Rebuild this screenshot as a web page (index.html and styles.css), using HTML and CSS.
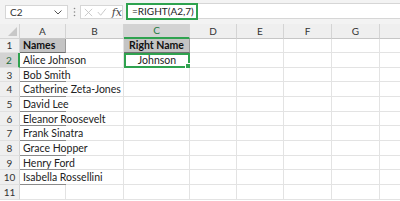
FILE: index.html
```html
<!DOCTYPE html>
<html>
<head>
<meta charset="utf-8">
<link rel="stylesheet" href="styles.css">
</head>
<body>
<div class="app">
  <div class="toolbar">
    <div class="namebox">
      <span class="ref">C2</span>
      <svg class="chev" width="8" height="5" viewBox="0 0 8 5"><path d="M0.5 0.5 L4 4 L7.5 0.5" fill="none" stroke="#555" stroke-width="1"/></svg>
    </div>
    <div class="dots">
      <svg width="3" height="10" viewBox="0 0 3 10"><circle cx="1.5" cy="1.5" r="0.8" fill="#888"/><circle cx="1.5" cy="5" r="0.8" fill="#888"/><circle cx="1.5" cy="8.5" r="0.8" fill="#888"/></svg>
    </div>
    <div class="fxbox">
      <svg width="11" height="11" viewBox="0 0 11 11"><path d="M1 1 L10 10 M10 1 L1 10" stroke="#c4c4c4" stroke-width="1.1" fill="none"/></svg>
      <svg width="12" height="10" viewBox="0 0 12 10"><path d="M1 5 L4.5 9 L11 1" stroke="#c4c4c4" stroke-width="1.1" fill="none"/></svg>
      <span class="fx">fx</span>
    </div>
    <div class="formula">
      <div class="formula-text">=RIGHT(A2,7)</div>
    </div>
  </div>
  <div class="sheet">
    <div class="corner"><svg width="9" height="9" viewBox="0 0 9 9"><path d="M9 0 L9 9 L0 9 Z" fill="#c8c8c8"/></svg></div>
    <div class="ch">A</div>
    <div class="ch">B</div>
    <div class="ch ch-sel">C</div>
    <div class="ch">D</div>
    <div class="ch">E</div>
    <div class="ch">F</div>
    <div class="ch">G</div>
    <div class="ch ch-last"></div>

    <div class="rh">1</div>
    <div class="c a head">Names</div>
    <div class="c b"></div>
    <div class="c cc head center">Right Name</div>
    <div class="c"></div><div class="c"></div><div class="c"></div><div class="c"></div><div class="c last"></div>

    <div class="rh rh-sel">2</div>
    <div class="c a ov">Alice Johnson</div>
    <div class="c b"></div>
    <div class="c cc center sel">Johnson<span class="handle"></span></div>
    <div class="c"></div><div class="c"></div><div class="c"></div><div class="c"></div><div class="c last"></div>

    <div class="rh">3</div>
    <div class="c a ov">Bob Smith</div>
    <div class="c b"></div>
    <div class="c cc"></div>
    <div class="c"></div><div class="c"></div><div class="c"></div><div class="c"></div><div class="c last"></div>

    <div class="rh">4</div>
    <div class="c a ov">Catherine Zeta-Jones</div>
    <div class="c b"></div>
    <div class="c cc"></div>
    <div class="c"></div><div class="c"></div><div class="c"></div><div class="c"></div><div class="c last"></div>

    <div class="rh">5</div>
    <div class="c a ov">David Lee</div>
    <div class="c b"></div>
    <div class="c cc"></div>
    <div class="c"></div><div class="c"></div><div class="c"></div><div class="c"></div><div class="c last"></div>

    <div class="rh">6</div>
    <div class="c a ov">Eleanor Roosevelt</div>
    <div class="c b"></div>
    <div class="c cc"></div>
    <div class="c"></div><div class="c"></div><div class="c"></div><div class="c"></div><div class="c last"></div>

    <div class="rh">7</div>
    <div class="c a ov">Frank Sinatra</div>
    <div class="c b"></div>
    <div class="c cc"></div>
    <div class="c"></div><div class="c"></div><div class="c"></div><div class="c"></div><div class="c last"></div>

    <div class="rh">8</div>
    <div class="c a ov">Grace Hopper</div>
    <div class="c b"></div>
    <div class="c cc"></div>
    <div class="c"></div><div class="c"></div><div class="c"></div><div class="c"></div><div class="c last"></div>

    <div class="rh">9</div>
    <div class="c a ov">Henry Ford</div>
    <div class="c b"></div>
    <div class="c cc"></div>
    <div class="c"></div><div class="c"></div><div class="c"></div><div class="c"></div><div class="c last"></div>

    <div class="rh">10</div>
    <div class="c a ov">Isabella Rossellini</div>
    <div class="c b"></div>
    <div class="c cc"></div>
    <div class="c"></div><div class="c"></div><div class="c"></div><div class="c"></div><div class="c last"></div>

    <div class="rh">11</div>
    <div class="c"></div>
    <div class="c b"></div>
    <div class="c cc"></div>
    <div class="c"></div><div class="c"></div><div class="c"></div><div class="c"></div><div class="c last"></div>
  </div>
</div>
</body>
</html>
```

FILE: styles.css
```css
html, body {
  margin: 0;
  padding: 0;
  background: #ffffff;
}
.app {
  width: 400px;
  height: 201px;
  overflow: hidden;
  font-family: "Lato", "Liberation Sans", sans-serif;
  color: #222;
}
.toolbar {
  height: 24px;
  background: #f3f3f3;
  display: flex;
  align-items: flex-start;
  padding: 3px 0 0 5px;
  box-sizing: border-box;
}
.namebox {
  margin-top: 2px;
  width: 63px;
  height: 14px;
  background: #fff;
  border: 1px solid #d6d6d6;
  box-sizing: border-box;
  display: flex;
  align-items: center;
  justify-content: space-between;
  padding: 0 5px 0 4px;
  font-size: 10px;
  color: #333;
}
.chev { margin-top: 1px; }
.dots {
  width: 12px;
  height: 16px;
  display: flex;
  align-items: center;
  justify-content: center;
  margin-top: 1px;
}
.fxbox {
  margin-top: 2px;
  width: 43px;
  height: 14px;
  background: #fff;
  border: 1px solid #d6d6d6;
  box-sizing: border-box;
  display: flex;
  align-items: center;
  gap: 4px;
  padding-left: 3px;
}
.fx {
  font-family: "DejaVu Serif", "Liberation Serif", serif;
  font-style: italic;
  font-size: 11px;
  color: #444;
  margin-left: 1px;
}
.formula {
  flex: 1;
  margin-left: 3px;
  height: 16px;
  background: #fff;
  border-top: 1px solid #d6d6d6;
  border-bottom: 1px solid #d6d6d6;
  box-sizing: border-box;
  margin-top: 0;
}
.formula-text {
  width: 72px;
  height: 17px;
  margin-top: -1px;
  border: 2px solid #2fa24f;
  box-sizing: border-box;
  font-size: 10px;
  line-height: 13px;
  padding-left: 4px;
  color: #222;
  white-space: nowrap;
}
.sheet {
  display: grid;
  grid-template-columns: 20px 46px 58px 66px 47px 47px 48px 48px 1fr;
  grid-template-rows: 14.5px repeat(11, 14.67px);
  font-size: 10.5px;
}
.corner {
  background: #efefef;
  border-right: 1px solid #d4d4d4;
  border-bottom: 1px solid #d4d4d4;
  box-sizing: border-box;
  display: flex;
  align-items: flex-end;
  justify-content: flex-end;
  padding: 0 2px 2px 0;
}
.ch {
  background: #efefef;
  border-right: 1px solid #d4d4d4;
  border-bottom: 1px solid #c6c6c6;
  box-sizing: border-box;
  display: flex;
  align-items: center;
  justify-content: center;
  font-size: 10px;
  color: #333;
}
.ch-sel {
  background: #d3d3d3;
  color: #1d7a42;
  border-bottom: 2px solid #2fa24f;
}
.ch-last { border-right: none; }
.rh {
  background: #efefef;
  border-right: 1px solid #d4d4d4;
  border-bottom: 1px solid #e0e0e0;
  box-sizing: border-box;
  display: flex;
  align-items: center;
  justify-content: center;
  font-size: 10px;
  color: #333;
}
.rh-sel {
  background: #d3d3d3;
  color: #1d6b3c;
  border-right: 2px solid #2fa24f;
}
.c {
  border-right: 1px solid #e3e3e3;
  border-bottom: 1px solid #e3e3e3;
  box-sizing: border-box;
  display: flex;
  align-items: center;
  white-space: nowrap;
  padding-left: 3px;
  position: relative;
}
.c.last { border-right: none; }
.c.a {
  border-bottom: 1px solid #8a8a8a;
}
.c.ov {
  border-right: none;
  overflow: visible;
}
.head {
  background: #c4c4c4;
  font-weight: 700;
  border-bottom: 1px solid #6f6f6f !important;
  border-right: 1px solid #9a9a9a;
  color: #111;
}
.center {
  justify-content: center;
  padding-left: 0;
}
.sel {
  border: 2px solid #2fa24f;
}
.handle {
  position: absolute;
  right: -3px;
  bottom: -3px;
  width: 4px;
  height: 4px;
  background: #2fa24f;
  border: 1px solid #fff;
}
```
